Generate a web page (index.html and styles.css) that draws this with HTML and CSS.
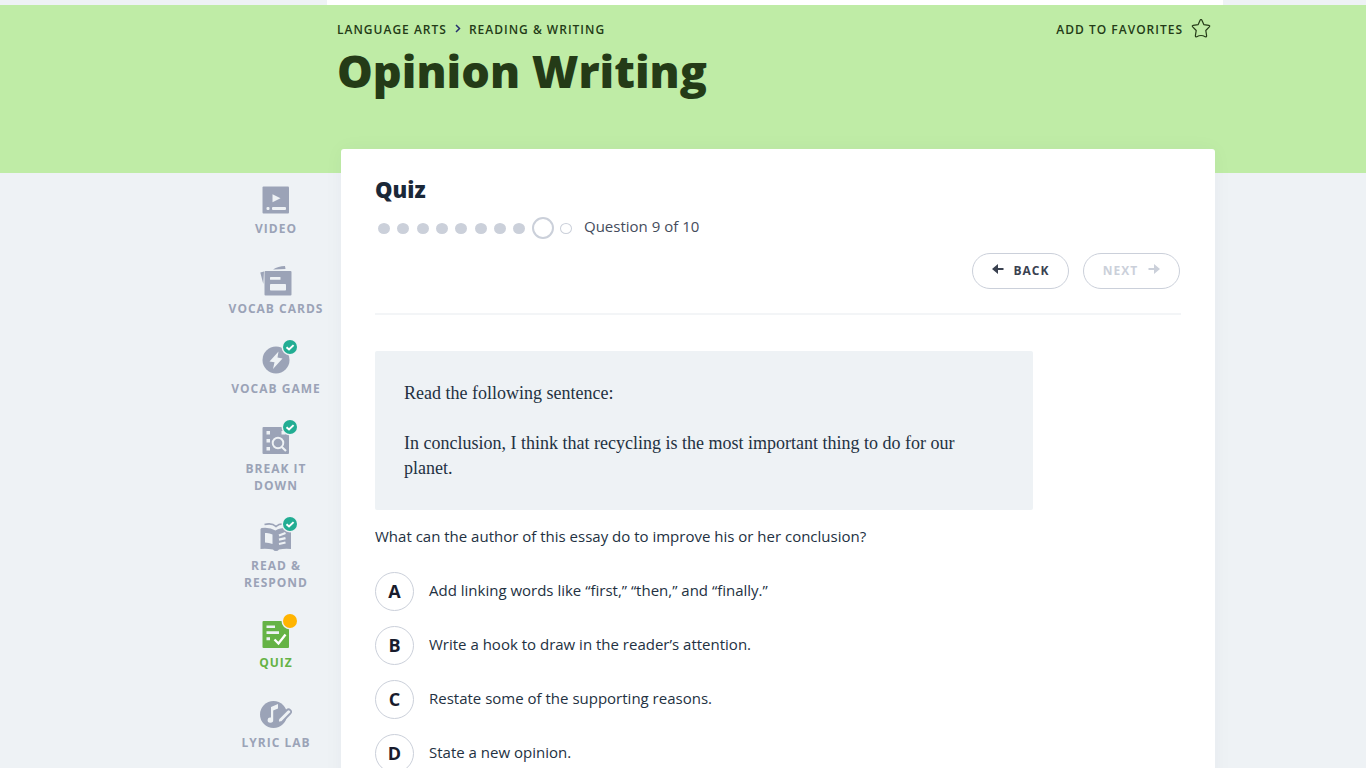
FILE: index.html
```html
<!DOCTYPE html>
<html lang="en">
<head>
<meta charset="utf-8">
<meta name="viewport" content="width=device-width, initial-scale=1">
<title>Opinion Writing - Quiz</title>
<link rel="stylesheet" href="styles.css">
</head>
<body>
<div class="topbar"><div class="topbar-inner"></div></div>
<header class="hero">
  <div class="hero-inner">
    <div class="hero-row">
      <nav class="crumbs" aria-label="Breadcrumb">
        <a href="#">Language Arts</a>
        <svg class="crumb-sep" viewBox="0 0 6 10" aria-hidden="true"><path d="M1 1 4.500 4.500 1 8" fill="none" stroke="#26306e" stroke-width="1.500"/></svg>
        <a href="#">Reading &amp; Writing</a>
      </nav>
      <button class="favorite" type="button">Add to Favorites
        <svg class="star" viewBox="0 0 20 20" aria-hidden="true"><path d="M9.200 1.100q.8-1.200 1.600 0l2 4.500 5 .7q1.600.4.500 1.600L14.800 11.500l.8 5.200q0 1.500-1.400 1Q10 15.300 5.800 17.700q-1.400.5-1.400-1L5.200 11.500 1.700 7.900Q.6 6.700 2.200 6.300l5-.7z" fill="none" stroke="#243b17" stroke-width="1.200" stroke-linejoin="round"/></svg>
      </button>
    </div>
    <h1 class="title">Opinion Writing</h1>
  </div>
</header>
<div class="layout">
  <nav class="steps" aria-label="Lesson activities">
    <a class="step" href="#">
      <span class="step-icon"><svg viewBox="0 0 32 32"><rect x="2.500" y="2.500" width="26.500" height="27" rx="1" fill="currentColor"/><path d="M12.500 10.300v8l8-4z" class="cut"/><rect x="6.500" y="23" width="3" height="3" rx="1" class="cut"/><rect x="12" y="23" width="14" height="3" rx="1" class="cut"/></svg></span>
      <span class="step-label">Video</span>
    </a>
    <a class="step" href="#">
      <span class="step-icon"><svg viewBox="0 0 32 32"><path d="M13 5.500Q18 2 25 2l.5 3zM.3 8.500 4 7.500 3.300 20z" fill="currentColor"/><rect x="4.500" y="7" width="27" height="24.500" rx="1" fill="currentColor"/><rect x="10" y="13" width="10.500" height="2.800" rx=".5" class="cut"/><rect x="10" y="20" width="16" height="6.500" rx=".8" class="cut"/></svg></span>
      <span class="step-label">Vocab Cards</span>
    </a>
    <a class="step" href="#">
      <span class="step-icon"><svg viewBox="0 0 32 32"><circle cx="16" cy="16" r="13.500" fill="currentColor"/><path d="M18.500 7.500 9.500 17.500l5 .8L13 25l9.500-10.500-5-1z" class="cut"/></svg><svg class="badge" viewBox="0 0 18 18"><circle cx="9" cy="9" r="8.500" class="cut"/><circle cx="9" cy="9" r="7" fill="#22ad93"/><path d="m5.500 9.300 2.500 2.200 4.600-4.400" fill="none" stroke="#fff" stroke-width="2"/></svg></span>
      <span class="step-label">Vocab Game</span>
    </a>
    <a class="step" href="#">
      <span class="step-icon"><svg viewBox="0 0 32 32"><rect x="2.500" y="3" width="26.500" height="27" rx="1" fill="currentColor"/><path d="M6.500 7H10v3.500H6.500zM6.500 15H10v3.500H6.500zM6.500 23H10v3.500H6.500zM21.500 7h4v3.500h-4z" class="cut"/><circle cx="18" cy="19" r="5.300" fill="none" stroke="#eef2f5" stroke-width="1.900"/><path d="m21.800 23 4.200 4" stroke="#eef2f5" stroke-width="2.200"/></svg><svg class="badge" viewBox="0 0 18 18"><circle cx="9" cy="9" r="8.500" class="cut"/><circle cx="9" cy="9" r="7" fill="#22ad93"/><path d="m5.500 9.300 2.500 2.200 4.600-4.400" fill="none" stroke="#fff" stroke-width="2"/></svg></span>
      <span class="step-label">Break It Down</span>
    </a>
    <a class="step" href="#">
      <span class="step-icon"><svg viewBox="0 0 32 32"><path d="M4.500 3.500Q12 1.500 16 5.500 20 1.500 27.500 3.500" fill="none" stroke="currentColor" stroke-width="1.600"/><path d="M1.500 7Q10 6 15.500 9.500 21 6 31 7v21q-7-.5-12 .5-1 1.500-3 1.500t-3-1.500Q7 27.500.5 28V8z" fill="currentColor"/><path d="M5 12q4-.5 7.500 1.500v9.500Q9 21.500 5 21.500z" class="cut"/><path d="m19 14.500 6.500-2.500M19 18.700l6.500-1.500M19 23l6.500-1.500" stroke="#eef2f5" stroke-width="2.300"/></svg><svg class="badge" viewBox="0 0 18 18"><circle cx="9" cy="9" r="8.500" class="cut"/><circle cx="9" cy="9" r="7" fill="#22ad93"/><path d="m5.500 9.300 2.500 2.200 4.600-4.400" fill="none" stroke="#fff" stroke-width="2"/></svg></span>
      <span class="step-label">Read &amp; Respond</span>
    </a>
    <a class="step is-current" href="#" aria-current="page">
      <span class="step-icon"><svg viewBox="0 0 32 32"><rect x="2.500" y="3" width="26.500" height="27" rx="1" fill="currentColor"/><path d="M6.500 7.500H15V10H6.500zM6.500 13.300H19V16H6.500zM6.500 19.300H10v3H6.500z" class="cut"/><path d="m14.500 21.500 4 4 7-9" fill="none" stroke="#fff" stroke-width="2.300"/></svg><svg class="badge" viewBox="0 0 18 18"><circle cx="9" cy="9" r="8.500" class="cut"/><circle cx="9" cy="9" r="7" fill="#ffb400"/></svg></span>
      <span class="step-label">Quiz</span>
    </a>
    <a class="step" href="#">
      <span class="step-icon"><svg viewBox="0 0 32 32"><circle cx="13.500" cy="16.500" r="13.500" fill="currentColor"/><path d="M17.500 25 18.500 20.500 27 12Q28.500 10.500 30.300 12.200T30.300 15.500L22 24z" fill="#eef2f5" stroke="currentColor" stroke-width="1.800" stroke-linejoin="round"/><path d="M11 22V9l7-3v4.500L13.200 12.500V22a2.800 2.600 0 1 1-2.200-2.400z" class="cut"/></svg></span>
      <span class="step-label">Lyric Lab</span>
    </a>
  </nav>
  <main class="card">
    <h2 class="card-title">Quiz</h2>
    <div class="progress">
      <ol class="dots" aria-hidden="true">
        <li class="dot"></li><li class="dot"></li><li class="dot"></li><li class="dot"></li><li class="dot"></li><li class="dot"></li><li class="dot"></li><li class="dot"></li><li class="dot dot-current"></li><li class="dot dot-open"></li>
      </ol>
      <span class="progress-text">Question 9 of 10</span>
    </div>
    <div class="pager">
      <button class="pill" type="button"><svg class="arrow" viewBox="0 0 12 12" aria-hidden="true"><path d="M0 5 6 0v4h5.500v2H6v4z" fill="currentColor"/></svg>Back</button>
      <button class="pill" type="button" disabled>Next<svg class="arrow" viewBox="0 0 12 12" aria-hidden="true"><path d="M12 5 6 0v4H.5v2H6v4z" fill="currentColor"/></svg></button>
    </div>
    <blockquote class="passage">
      <p>Read the following sentence:</p>
      <p>In conclusion, I think that recycling is the most important thing to do for our planet.</p>
    </blockquote>
    <p class="question">What can the author of this essay do to improve his or her conclusion?</p>
    <div class="options">
      <button class="option" type="button"><span class="letter">A</span><span class="answer">Add linking words like “first,” “then,” and “finally.”</span></button>
      <button class="option" type="button"><span class="letter">B</span><span class="answer">Write a hook to draw in the reader’s attention.</span></button>
      <button class="option" type="button"><span class="letter">C</span><span class="answer">Restate some of the supporting reasons.</span></button>
      <button class="option" type="button"><span class="letter">D</span><span class="answer">State a new opinion.</span></button>
    </div>
  </main>
</div>
</body>
</html>
```
FILE: styles.css
```css
* { box-sizing: border-box; }
body {
  margin: 0;
  background: #eef2f5;
  color: #233142;
  font: 15px/25px "Open Sans", "Noto Sans", sans-serif;
}
h1, h2, p, ol, blockquote { margin: 0; padding: 0; }
a { color: inherit; text-decoration: none; }
button { font: inherit; color: inherit; background: none; border: 0; padding: 0; cursor: pointer; }
svg { display: block; }
.cut { fill: #eef2f5; }

.topbar { display: flex; justify-content: center; padding-left: 184px; }
.topbar-inner { width: 100%; max-width: 896px; height: 5px; background: #fff; }
.hero { background: #bfeca6; color: #243b17; min-height: 168px; }
.hero-inner { max-width: 1064px; margin: 0 auto; padding: 12px 4px 0 186px; }
.hero-row { display: flex; justify-content: space-between; align-items: center; height: 24px; }
.crumbs, .favorite {
  display: flex;
  align-items: center;
  gap: 8px;
  font-size: 12px;
  font-weight: 600;
  letter-spacing: 1px;
  text-transform: uppercase;
}
.crumb-sep { width: 6px; height: 10px; }
.star { width: 20px; height: 20px; }
.title { font-size: 45px; line-height: 60px; font-weight: 800; }

.layout {
  display: grid;
  grid-template-columns: 190px minmax(0, 1fr);
  max-width: 1064px;
  margin: 0 auto;
}
.steps { display: flex; flex-direction: column; gap: 27px; padding: 11px 0 24px 60px; }
.step { display: flex; flex-direction: column; align-items: center; gap: 4px; color: #9ba3b7; }
.step.is-current { color: #65b345; }
.step-icon { position: relative; width: 32px; height: 32px; }
.badge { position: absolute; top: -6px; right: -7px; width: 18px; height: 18px; }
.step-label {
  max-width: 100px;
  font-size: 12px;
  line-height: 17px;
  font-weight: 700;
  letter-spacing: 1px;
  text-align: center;
  text-transform: uppercase;
}

.card {
  margin-top: -24px;
  padding: 24px 34px;
  background: #fff;
  border-radius: 3px;
  box-shadow: 0 0 20px rgba(30, 50, 80, .04);
}
.card-title { color: #1b2838; font-size: 22px; line-height: 32px; font-weight: 800; }
.progress { display: flex; align-items: center; gap: 12px; height: 24px; margin: 11px 0 13px 3px; color: #454c5c; }
.progress-text { padding-bottom: 3px; }
.dots { display: flex; align-items: center; justify-content: space-between; width: 194px; list-style: none; }
.dot { width: 12px; height: 11px; border-radius: 50%; background: #cbd0da; }
.dot-current { width: 22px; height: 22px; margin: 0 -1px; background: #fff; border: 2px solid #cbd0da; }
.dot-open { background: #fff; border: 1px solid #cbd0da; }
.pager { display: flex; justify-content: flex-end; gap: 14px; padding: 0 1px 24px 0; border-bottom: 2px solid #f3f5f7; }
.pill {
  display: flex;
  align-items: center;
  justify-content: center;
  gap: 10px;
  width: 97px;
  height: 36px;
  padding-bottom: 2px;
  border: 1px solid #cbd0da;
  border-radius: 18px;
  color: #3a4150;
  font-size: 12px;
  font-weight: 700;
  letter-spacing: 1px;
  text-transform: uppercase;
}
.pill:disabled { color: #cbd0da; cursor: default; }
.arrow { width: 12px; height: 12px; }
.passage {
  display: grid;
  gap: 25px;
  max-width: 658px;
  margin-top: 36px;
  padding: 30px 29px 29px;
  background: #eef2f5;
  border-radius: 2px;
  font-family: "Liberation Serif", serif;
  font-size: 18px;
}
.question { margin-top: 14px; }
.options { display: grid; gap: 15px; margin-top: 23px; }
.option { display: flex; align-items: center; gap: 15px; text-align: left; }
.answer { padding-bottom: 3px; }
.letter {
  display: grid;
  place-items: center;
  flex: none;
  width: 39px;
  height: 39px;
  border: 1px solid #cbd0da;
  border-radius: 50%;
  color: #181b2c;
  font-size: 18px;
  font-weight: 700;
}
```
